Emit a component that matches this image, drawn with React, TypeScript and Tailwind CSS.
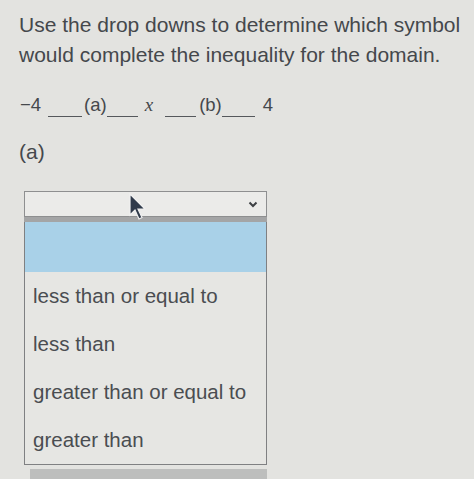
import React from "react";

const options = [
  "less than or equal to",
  "less than",
  "greater than or equal to",
  "greater than",
];

function Blank({ w }: { w: number }) {
  return (
    <span
      className="inline-block border-b border-[#55585c] translate-y-[1px]"
      style={{ width: w }}
    />
  );
}

export default function App() {
  return (
    <div className="relative h-[479px] w-[474px] overflow-hidden bg-[#e3e3e0] font-['Liberation_Sans',Arial,sans-serif] text-[#45484c]">
      <div className="pl-[19px] pt-[10px]">
        <p className="whitespace-nowrap text-[21px] leading-[30px]">
          Use the drop downs to determine which symbol
          <br />
          would complete the inequality for the domain.
        </p>

        <div className="mt-[24px] flex items-end text-[18.5px] leading-[22px] pl-[1px]">
          <span>−4</span>
          <span className="ml-[7px]" />
          <Blank w={34} />
          <span className="ml-[2px]">(a)</span>
          <Blank w={31} />
          <span className="ml-[7px] italic font-['Liberation_Serif',serif] text-[19px]">x</span>
          <span className="ml-[12px]" />
          <Blank w={31} />
          <span className="ml-[3px]">(b)</span>
          <Blank w={33} />
          <span className="ml-[8px]">4</span>
        </div>

        <p className="mt-[24px] text-[21px] leading-[24px]">(a)</p>
      </div>

      <div className="ml-[24px] mt-[27px] w-[243px]">
        <div className="flex h-[26px] items-center justify-end border border-[#8e8f90] bg-[#ebebe9] pr-[8px]">
          <svg width="10" height="7" viewBox="0 0 10 7">
            <path d="M1.5 1.5 L5 5 L8.5 1.5" fill="none" stroke="#3d4044" strokeWidth="2" />
          </svg>
        </div>
        <div className="h-[5px] bg-[#a4a5a6]" />
        <div className="border border-t-0 border-[#7f8082] bg-[#e6e6e3]">
          <div className="h-[50px] bg-[#a9d1e8]" />
          {options.map((o) => (
            <div key={o} className="flex h-[48px] items-center pl-[8px] text-[20.5px] text-[#4a4d51]">
              {o}
            </div>
          ))}
        </div>
        <div className="ml-[6px] mt-[4px] h-[10px] bg-[#bdbebd]" />
      </div>

      <svg className="absolute left-[128px] top-[193px]" width="22" height="30" viewBox="0 0 22 30">
        <path d="M2 1 L2 22 L7 17 L11 26 L14 24.5 L10 16 L17 16 Z" fill="#2f3a4a" stroke="#f0f0f0" strokeWidth="1.2" />
      </svg>
    </div>
  );
}
